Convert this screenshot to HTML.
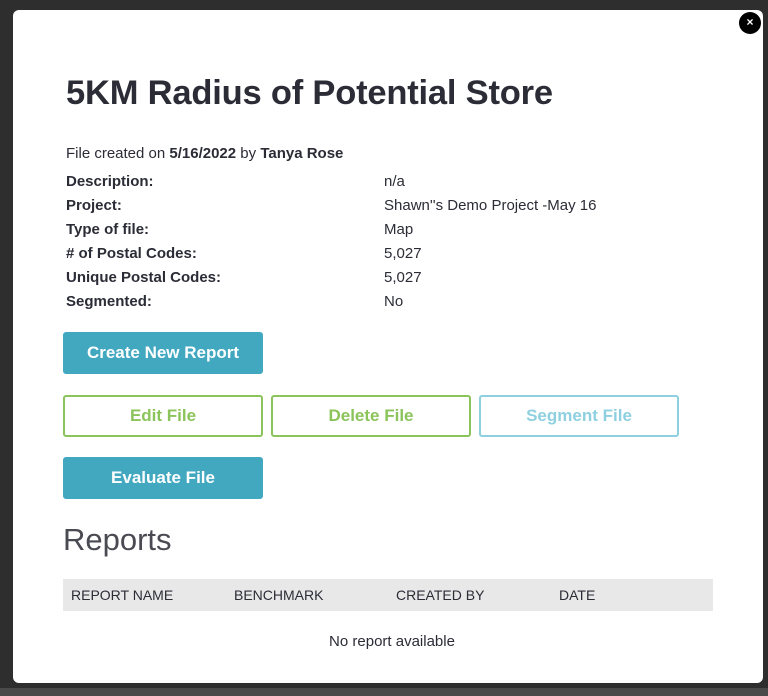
<!DOCTYPE html>
<html><head><style>
body{margin:0;width:768px;height:696px;background:#2e2e2e;position:relative;overflow:hidden;font-family:"Liberation Sans",sans-serif;color:#2b2c36}
.m{position:absolute;left:13px;top:10px;width:750px;height:673px;background:#fff;border-radius:6px}
.x{position:absolute;left:739px;top:12px;width:22px;height:22px;border-radius:50%;background:#000;color:#fff;font-size:12px;text-align:center;line-height:21px;font-weight:bold}
h1{position:absolute;left:66px;top:74px;margin:0;font-size:34.5px;font-weight:bold;letter-spacing:-0.2px}
.t{position:absolute;font-size:15px}
.b{position:absolute;width:200px;height:42px;box-sizing:border-box;border-radius:3px;font-size:17px;font-weight:bold;text-align:center;line-height:40px}
.f{background:#42a8c0;color:#fff;border:1px solid #42a8c0}
.g{border:2px solid #8bc45a;color:#8bc45a;line-height:38px}
.c{border:2px solid #8fd0e0;color:#8fd0e0;line-height:38px}
.th{position:absolute;left:63px;top:579px;width:650px;height:32px;background:#e8e8e8;font-size:14px}
.th span{position:absolute;top:8px}
</style></head><body>
<div style="position:absolute;left:0;top:688px;width:768px;height:8px;background:#4a4a4a"></div>
<div class="m"></div>
<div class="x">×</div>
<h1>5KM Radius of Potential Store</h1>
<div class="t" style="left:66px;top:145px">File created on <b>5/16/2022</b> by <b>Tanya Rose</b></div>
<div class="t" style="left:66px;top:170px;font-weight:bold;line-height:24px">Description:<br>Project:<br>Type of file:<br># of Postal Codes:<br>Unique Postal Codes:<br>Segmented:</div>
<div class="t" style="left:384px;top:170px;line-height:24px">n/a<br>Shawn''s Demo Project -May 16<br>Map<br>5,027<br>5,027<br>No</div>
<div class="b f" style="left:63px;top:332px">Create New Report</div>
<div class="b g" style="left:63px;top:395px">Edit File</div>
<div class="b g" style="left:271px;top:395px">Delete File</div>
<div class="b c" style="left:479px;top:395px">Segment File</div>
<div class="b f" style="left:63px;top:457px">Evaluate File</div>
<div class="t" style="left:63px;top:522px;font-size:31px;color:#4a4a52">Reports</div>
<div class="th"><span style="left:8px">REPORT NAME</span><span style="left:171px">BENCHMARK</span><span style="left:333px">CREATED BY</span><span style="left:496px">DATE</span></div>
<div class="t" style="left:0;width:784px;text-align:center;top:633px">No report available</div>
</body></html>
